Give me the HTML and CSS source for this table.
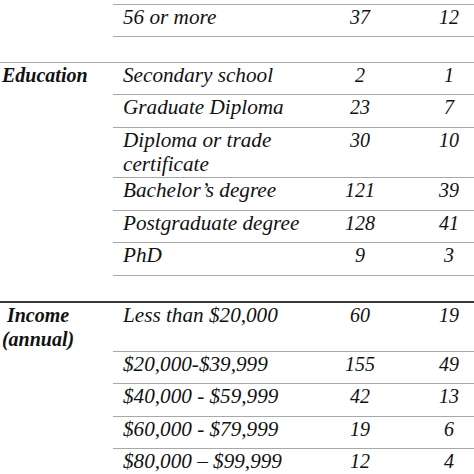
FILE: index.html
```
<!DOCTYPE html>
<html>
<head>
<meta charset="utf-8">
<link rel="stylesheet" href="styles.css">
</head>
<body>
<table class="tbl">
  <colgroup>
    <col class="c1"><col class="c2"><col class="c3"><col class="c4">
  </colgroup>
  <tr class="h32">
    <td class="cat"></td><td class="lbl b">56 or more</td><td class="num b">37</td><td class="num b">12</td>
  </tr>
  <tr class="h26">
    <td class="cat"></td><td class="b"></td><td class="b"></td><td class="b"></td>
  </tr>
  <tr class="h32">
    <td class="cat b edu">Education</td><td class="lbl b">Secondary school</td><td class="num b">2</td><td class="num b">1</td>
  </tr>
  <tr class="h33">
    <td class="cat"></td><td class="lbl b">Graduate Diploma</td><td class="num b">23</td><td class="num b">7</td>
  </tr>
  <tr class="h50">
    <td class="cat"></td><td class="lbl b">Diploma or trade<br>certificate</td><td class="num b">30</td><td class="num b">10</td>
  </tr>
  <tr class="h33">
    <td class="cat"></td><td class="lbl b">Bachelor’s degree</td><td class="num b">121</td><td class="num b">39</td>
  </tr>
  <tr class="h32">
    <td class="cat"></td><td class="lbl b">Postgraduate degree</td><td class="num b">128</td><td class="num b">41</td>
  </tr>
  <tr class="h33">
    <td class="cat"></td><td class="lbl b">PhD</td><td class="num b">9</td><td class="num b">3</td>
  </tr>
  <tr class="h26">
    <td class="cat"></td><td class="b"></td><td class="b"></td><td class="b"></td>
  </tr>
  <tr class="h50">
    <td class="cat bt inc"><span class="inc-txt">Income<br>(annual)</span></td><td class="lbl bt">Less than $20,000</td><td class="num bt">60</td><td class="num bt">19</td>
  </tr>
  <tr class="h32">
    <td class="cat"></td><td class="lbl b">$20,000-$39,999</td><td class="num b">155</td><td class="num b">49</td>
  </tr>
  <tr class="h33">
    <td class="cat"></td><td class="lbl b">$40,000 - $59,999</td><td class="num b">42</td><td class="num b">13</td>
  </tr>
  <tr class="h32">
    <td class="cat"></td><td class="lbl b">$60,000 - $79,999</td><td class="num b">19</td><td class="num b">6</td>
  </tr>
  <tr class="h32">
    <td class="cat"></td><td class="lbl b">$80,000 – $99,999</td><td class="num b">12</td><td class="num b">4</td>
  </tr>
</table>
</body>
</html>
```
FILE: styles.css
```
html, body {
  margin: 0;
  padding: 0;
  background: #fff;
  overflow: hidden;
  width: 474px;
  height: 474px;
}
.tbl {
  margin-top: 4px;
  width: 493px;
  table-layout: fixed;
  border-collapse: separate;
  border-spacing: 0;
  font-family: "Liberation Serif", "Times New Roman", serif;
  font-style: italic;
  font-size: 20px;
  line-height: 24px;
  color: #111;
}
.c1 { width: 113px; }
.c2 { width: 202px; }
.c3 { width: 90px; }
.c4 { width: 88px; }
.tbl td {
  padding: 0;
  vertical-align: top;
  white-space: nowrap;
}
.h26 { height: 26px; }
.h32 { height: 32px; }
.h33 { height: 33px; }
.h50 { height: 50px; }
.tbl td.b { border-top: 1.5px solid #a8a8a8; }
.tbl td.bt { border-top: 2px solid #3a3a3a; }
.tbl td.lbl { padding-left: 10px; font-size: 21.2px; }
.tbl td.num { text-align: center; }
.tbl td.cat { font-weight: bold; }
.tbl td.edu { padding-left: 2px; }
.inc-txt {
  display: inline-block;
  width: 76px;
  text-align: center;
}
```
